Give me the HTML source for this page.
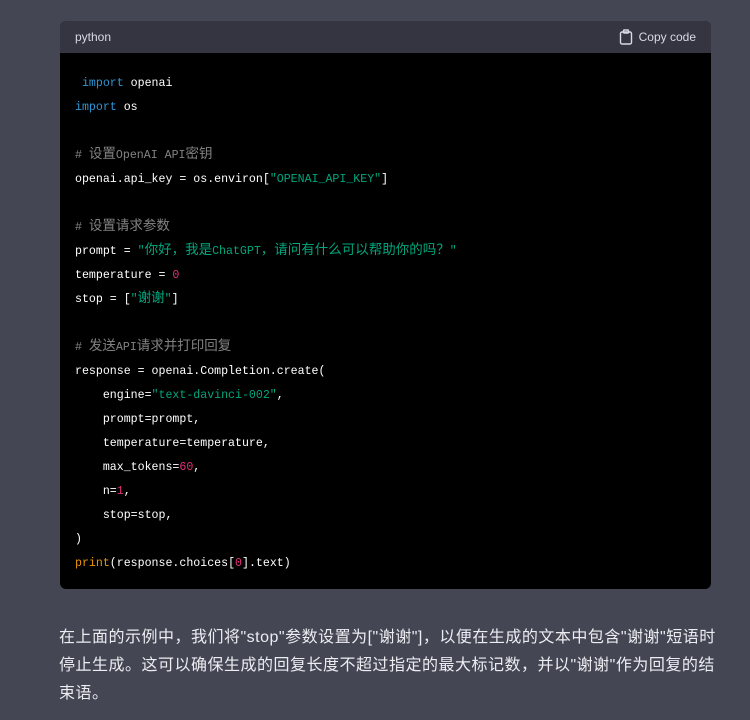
<!DOCTYPE html>
<html><head><meta charset="utf-8"><style>
body{margin:0;background:#444654;width:750px;height:720px;overflow:hidden;font-family:"Liberation Sans","Noto Sans CJK SC",sans-serif;}
.blk{position:absolute;left:60px;top:21px;width:651px;height:568px;background:#000;border-radius:6px;overflow:hidden;}
.hd{height:32px;background:#343541;color:#d9d9e3;font-size:12px;display:flex;align-items:center;justify-content:space-between;padding:0 15px;}
.cp{display:flex;align-items:center;gap:6px;}
pre{margin:0;padding:19px 15px 0 15px;font-family:"Liberation Mono","Noto Sans CJK SC",monospace;font-size:11.6px;line-height:24px;color:#fff;}
.z{font-size:13.5px;line-height:0}
.k{color:#2e95d3}.s{color:#00a67d}.n{color:#df3079}.c{color:#ffffff80}
.p{position:absolute;left:59px;top:624px;width:662px;color:#ececf1;font-size:16px;line-height:28px;letter-spacing:0.5px;}
</style></head><body>
<div class="blk"><div class="hd"><span>python</span><span class="cp"><svg width="14" height="16" viewBox="0 0 14 16" fill="none" stroke="#d9d9e3" stroke-width="1.4"><rect x="1.5" y="3" width="11" height="12" rx="1.5"/><rect x="4.5" y="1" width="5" height="3" rx="0.8"/></svg>Copy code</span></div>
<pre> <span class="k">import</span> openai
<span class="k">import</span> os

<span class="c"># <span class="z">设置</span>OpenAI API<span class="z">密钥</span></span>
openai.api_key = os.environ[<span class="s">"OPENAI_API_KEY"</span>]

<span class="c"># <span class="z">设置请求参数</span></span>
prompt = <span class="s">"<span class="z">你好，我是</span>ChatGPT<span class="z">，请问有什么可以帮助你的吗？</span>"</span>
temperature = <span class="n">0</span>
stop = [<span class="s">"<span class="z">谢谢</span>"</span>]

<span class="c"># <span class="z">发送</span>API<span class="z">请求并打印回复</span></span>
response = openai.Completion.create(
    engine=<span class="s">"text-davinci-002"</span>,
    prompt=prompt,
    temperature=temperature,
    max_tokens=<span class="n">60</span>,
    n=<span class="n">1</span>,
    stop=stop,
)
<span style="color:#e9950c">print</span>(response.choices[<span class="n">0</span>].text)</pre></div>
<div class="p">在上面的示例中，我们将"stop"参数设置为["谢谢"]，以便在生成的文本中包含"谢谢"短语时停止生成。这可以确保生成的回复长度不超过指定的最大标记数，并以"谢谢"作为回复的结束语。</div>
</body></html>
